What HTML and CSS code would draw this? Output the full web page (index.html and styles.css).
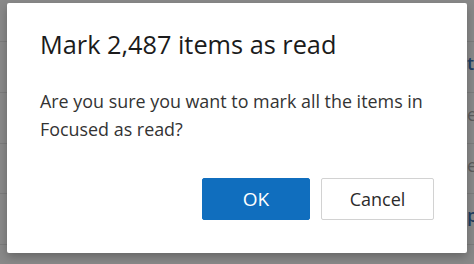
FILE: index.html
```html
<!DOCTYPE html>
<html>
<head>
<meta charset="utf-8">
<link rel="stylesheet" href="styles.css">
</head>
<body>
<div class="backdrop">
  <div class="bg-rows">
    <div class="bg-row r1"></div>
    <div class="bg-row r2"><span class="frag blue">t</span></div>
    <div class="bg-row r3"><span class="frag">e</span></div>
    <div class="bg-row r4"><span class="frag">e</span></div>
    <div class="bg-row r5"><span class="frag blue">p</span></div>
  </div>
  <div class="dialog">
    <h1 class="title">Mark 2,487 items as read</h1>
    <p class="message">Are you sure you want to mark all the items in Focused as read?</p>
    <div class="actions">
      <button class="btn primary">OK</button>
      <button class="btn secondary">Cancel</button>
    </div>
  </div>
</div>
</body>
</html>
```
FILE: styles.css
```css
html, body {
  margin: 0;
  padding: 0;
  width: 474px;
  height: 264px;
  overflow: hidden;
  background: #898989;
  font-family: "Open Sans", "Noto Sans", sans-serif;
}
.backdrop {
  position: relative;
  width: 474px;
  height: 264px;
}
.bg-rows {
  position: absolute;
  inset: 0;
}
.bg-row {
  border-bottom: 1px solid #7c7c7c;
  position: relative;
}
.r1 { height: 41px; }
.r2 { height: 50px; }
.r3 { height: 50px; }
.r4 { height: 49px; }
.r5 { height: 50px; }
.frag {
  position: absolute;
  left: 467px;
  top: 10px;
  font-size: 18px;
  line-height: 22px;
  color: #5d5d5d;
}
.frag.blue { color: #1f3f63; font-weight: 600; }
.dialog {
  position: absolute;
  left: 7px;
  top: 3px;
  width: 460px;
  height: 250px;
  background: #fff;
  border-radius: 2px;
  box-shadow: 0 4px 10px rgba(0,0,0,0.25);
  box-sizing: border-box;
  padding: 24px 33px 0 33px;
  display: flex;
  flex-direction: column;
}
.title {
  margin: 0;
  font-size: 25.3px;
  font-weight: 400;
  line-height: 34px;
  color: #1b1b1b;
}
.message {
  margin: 26px 0 0 0;
  font-size: 17.9px;
  line-height: 28px;
  color: #333;
}
.actions {
  display: flex;
  justify-content: flex-end;
  gap: 11px;
  margin-top: 35px;
}
.btn {
  height: 42px;
  border-radius: 2px;
  font-family: inherit;
  font-size: 18px;
  padding: 0;
  cursor: pointer;
}
.primary {
  width: 108px;
  background: #106ebe;
  border: 1px solid #106ebe;
  color: #fff;
  font-size: 19px;
}
.secondary {
  width: 113px;
  background: #fff;
  border: 1px solid #d2d2d2;
  color: #2b2b2b;
}
```
